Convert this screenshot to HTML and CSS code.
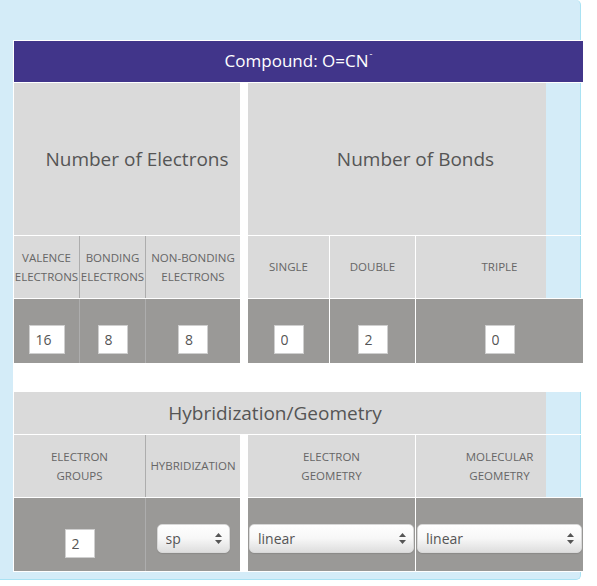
FILE: index.html
```html
<!DOCTYPE html>
<html lang="en">
<head>
  <meta charset="UTF-8" />
  <title>Lewis Structure Worksheet</title>
  <link rel="stylesheet" href="styles.css">
</head>
<body>

  <div class="panel">
    <div class="sheet">
      <div class="compound">Compound: O=CN<sup>-</sup></div>

      <!-- electrons / bonds -->
      <div class="row big">
        <div class="left title electrons">Number of Electrons</div>
        <div class="right title tail">Number of Bonds</div>
      </div>

      <div class="row heads">
        <div class="left">
          <div class="cell c1">Valence<br>Electrons</div>
          <div class="cell c2 sep">Bonding<br>Electrons</div>
          <div class="cell c3 sep">Non-bonding<br>Electrons</div>
        </div>
        <div class="right">
          <div class="cell s1">Single</div>
          <div class="cell s2 sep-w">Double</div>
          <div class="cell s3 sep-w tail">Triple</div>
        </div>
      </div>

      <div class="row data">
        <div class="left">
          <div class="cell c1"><input type="text" class="num wide" value="16"></div>
          <div class="cell c2 sep"><input type="text" class="num" value="8"></div>
          <div class="cell c3 sep"><input type="text" class="num" value="8"></div>
        </div>
        <div class="right">
          <div class="cell s1"><input type="text" class="num" value="0"></div>
          <div class="cell s2 sep-w"><input type="text" class="num" value="2"></div>
          <div class="cell s3 sep-w"><input type="text" class="num" value="0"></div>
        </div>
      </div>

      <div class="gap"></div>

      <!-- hybridization / geometry -->
      <div class="row hyb-title tail">Hybridization/Geometry</div>

      <div class="row heads">
        <div class="left">
          <div class="cell g1">Electron<br>Groups</div>
          <div class="cell g2 sep">Hybridization</div>
        </div>
        <div class="right">
          <div class="cell eg">Electron<br>Geometry</div>
          <div class="cell mg sep-w tail">Molecular<br>Geometry</div>
        </div>
      </div>

      <div class="row data tall">
        <div class="left">
          <div class="cell g1 low"><input type="text" class="num" value="2"></div>
          <div class="cell g2 sep">
            <span class="pick short">
              <select><option>sp</option><option>sp2</option><option>sp3</option></select>
              <svg class="arrows" width="7" height="11" viewBox="0 0 7 11"><path d="M3.5 0L7 4H0z M0 7H7L3.5 11z" fill="#555"/></svg>
            </span>
          </div>
        </div>
        <div class="right">
          <div class="cell eg">
            <span class="pick long">
              <select><option>linear</option><option>trigonal planar</option><option>tetrahedral</option></select>
              <svg class="arrows" width="7" height="11" viewBox="0 0 7 11"><path d="M3.5 0L7 4H0z M0 7H7L3.5 11z" fill="#555"/></svg>
            </span>
          </div>
          <div class="cell mg sep-w">
            <span class="pick long">
              <select><option>linear</option><option>bent</option><option>trigonal planar</option></select>
              <svg class="arrows" width="7" height="11" viewBox="0 0 7 11"><path d="M3.5 0L7 4H0z M0 7H7L3.5 11z" fill="#555"/></svg>
            </span>
          </div>
        </div>
      </div>
    </div>
  </div>

</body>
</html>
```

FILE: styles.css
```css
body {
  margin: 0;
  background-color: #fff;
  font-family: "Open Sans", "DejaVu Sans", sans-serif;
}
.panel {
  margin-left: -5px;
  width: 567px;
  height: 539px;
  padding: 40px 0 0 18px;
  background-color: #d4ecf8;
  border-right: 1px solid #a9e2f3;
  border-bottom: 1px solid #a9e2f3;
  border-radius: 0 5px 5px 5px;
}
.sheet {
  width: 570px;
  border-top: 1px solid #fff;
  border-left: 1px solid #fff;
  box-sizing: border-box;
}
.compound {
  height: 42px;
  display: flex;
  align-items: center;
  justify-content: center;
  padding-bottom: 2px;
  box-sizing: border-box;
  background-color: #41358a;
  color: #fff;
  font-size: 17px;
  border-bottom: 1px solid #fff;
}
.compound sup {
  position: relative;
  top: -7px;
  font-size: 9px;
  line-height: 1;
  margin-left: 1px;
}
.row {
  display: flex;
  border-bottom: 1px solid #fff;
}
.left {
  width: 226px;
  display: flex;
}
.right {
  width: 343px;
  border-left: 8px solid #fff;
  box-sizing: border-box;
  display: flex;
}
.tail {
  background: linear-gradient(to right, #dadada calc(100% - 37px), transparent calc(100% - 37px));
}
.gap {
  height: 28px;
  background-color: #fff;
}

/* big titles */
.title {
  height: 152px;
  display: flex;
  align-items: center;
  justify-content: center;
  font-size: 19px;
  color: #555;
}
.electrons {
  background-color: #dadada;
  padding-left: 20px;
  box-sizing: border-box;
}
.hyb-title {
  height: 42px;
  align-items: center;
  justify-content: center;
  padding-right: 47px;
  font-size: 19px;
  color: #555;
}

/* column headers */
.cell {
  box-sizing: border-box;
  text-align: center;
}
.heads .cell {
  height: 62px;
  display: flex;
  align-items: center;
  justify-content: center;
  background-color: #dadada;
  font-size: 11.5px;
  line-height: 19.5px;
  text-transform: uppercase;
  color: #666;
}
.heads .cell.tail {
  background: linear-gradient(to right, #dadada calc(100% - 37px), transparent calc(100% - 37px));
}
.c1 { width: 65px; }
.c2 { width: 66px; }
.c3 { width: 95px; }
.s1 { width: 81px; }
.s2 { width: 86px; }
.s3 { width: 168px; }
.g1 { width: 131px; }
.g2 { width: 95px; }
.eg { width: 167px; }
.mg { width: 168px; }
.sep { border-left: 1px solid #adadad; }
.sep-w { border-left: 1px solid #fff; }

/* value rows */
.data .cell {
  height: 64px;
  padding-top: 26px;
  background-color: #9a9997;
}
.data.tall .cell {
  height: 73px;
}
.data.tall .cell.low {
  padding-top: 31px;
}
.num {
  width: 30px;
  height: 29px;
  box-sizing: border-box;
  padding: 0 6px;
  border: 1px solid #cfcfcf;
  background-color: #fff;
  font-family: "Open Sans", sans-serif;
  font-size: 14px;
  color: #555;
  outline: none;
}
.num.wide {
  width: 36px;
}

/* drop-downs */
.pick {
  position: relative;
  display: inline-block;
}
.pick select {
  display: block;
  height: 29px;
  padding: 0 0 0 8px;
  border: 1px solid #d8d8d8;
  border-radius: 5px;
  background: linear-gradient(#fff 0%, #f7f7f7 50%, #dedede 100%);
  box-shadow: 0 1px 1px rgba(0,0,0,0.1);
  font-family: "Open Sans", sans-serif;
  font-size: 14px;
  color: #555;
  -webkit-appearance: none;
  appearance: none;
  outline: none;
}
.pick.short select { width: 73px; }
.pick.long select { width: 165px; }
.arrows {
  position: absolute;
  right: 8px;
  top: 9px;
  pointer-events: none;
}
```
